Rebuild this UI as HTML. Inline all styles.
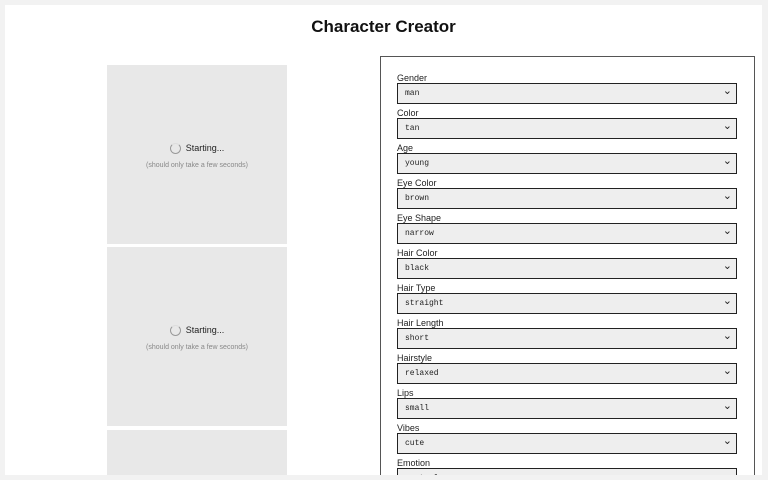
<!DOCTYPE html>
<html><head><style>
body{margin:0;width:768px;height:480px;overflow:hidden;background:#f2f2f2;font-family:"Liberation Sans",sans-serif;}
.main{position:absolute;left:5px;top:5px;width:757px;height:470px;background:#fff;overflow:hidden;}
h1{position:absolute;left:0;right:0;top:12px;margin:0;text-align:center;font-size:17px;font-weight:bold;color:#111;}
.box{position:absolute;left:102px;width:180px;background:#e8e8e8;}
.st{position:absolute;left:0;right:0;text-align:center;font-size:9px;color:#222;}
.sub{position:absolute;left:0;right:0;text-align:center;font-size:7px;color:#888;}
.sp{display:inline-block;width:9px;height:9px;border:1.5px solid #999;border-top-color:#ddd;border-radius:50%;vertical-align:-3px;margin-right:5px;}
.panel{position:absolute;left:375px;top:51px;width:373px;height:440px;border:1px solid #555;}
.f{position:absolute;left:16px;width:340px;}
.f label{display:block;font-size:9px;color:#222;height:11px;line-height:12px;}
.sel{height:19px;border:1px solid #222;background:#eee;font-family:"Liberation Mono",monospace;font-size:8px;line-height:20px;padding-left:7px;position:relative;color:#222;}
.sel:after{content:"⌄";position:absolute;right:4px;top:-3px;font-size:11px;font-family:"DejaVu Sans";}
</style></head><body><div class="main">
<h1>Character Creator</h1>
<div class="box" style="top:60px;height:179px"><div class="st" style="top:78px"><span class="sp"></span>Starting...</div><div class="sub" style="top:97px">(should only take a few seconds)</div></div>
<div class="box" style="top:242px;height:179px"><div class="st" style="top:78px"><span class="sp"></span>Starting...</div><div class="sub" style="top:97px">(should only take a few seconds)</div></div>
<div class="box" style="top:425px;height:60px"></div>
<div class="panel">
<div class="f" style="top:15px"><label>Gender</label><div class="sel">man</div></div>
<div class="f" style="top:50px"><label>Color</label><div class="sel">tan</div></div>
<div class="f" style="top:85px"><label>Age</label><div class="sel">young</div></div>
<div class="f" style="top:120px"><label>Eye Color</label><div class="sel">brown</div></div>
<div class="f" style="top:155px"><label>Eye Shape</label><div class="sel">narrow</div></div>
<div class="f" style="top:190px"><label>Hair Color</label><div class="sel">black</div></div>
<div class="f" style="top:225px"><label>Hair Type</label><div class="sel">straight</div></div>
<div class="f" style="top:260px"><label>Hair Length</label><div class="sel">short</div></div>
<div class="f" style="top:295px"><label>Hairstyle</label><div class="sel">relaxed</div></div>
<div class="f" style="top:330px"><label>Lips</label><div class="sel">small</div></div>
<div class="f" style="top:365px"><label>Vibes</label><div class="sel">cute</div></div>
<div class="f" style="top:400px"><label>Emotion</label><div class="sel">neutral</div></div>
</div>
</div></body></html>
